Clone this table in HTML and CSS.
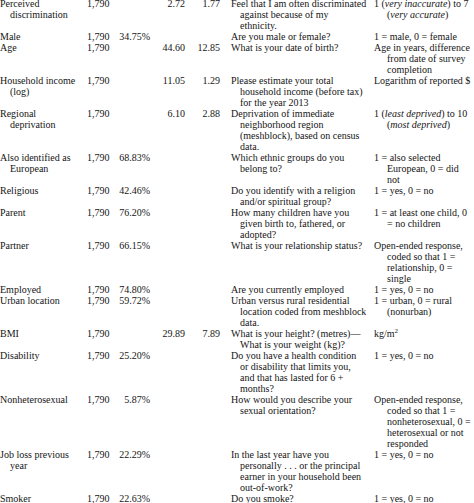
FILE: index.html
```html
<!DOCTYPE html>
<html lang="en">
<head>
<meta charset="utf-8">
<title>Descriptive statistics</title>
<link rel="stylesheet" href="styles.css">
</head>
<body>
<table class="stats">
  <colgroup>
    <col class="w-var">
    <col class="w-n">
    <col class="w-pct">
    <col class="w-mean">
    <col class="w-sd">
    <col class="w-q">
    <col class="w-code">
  </colgroup>
  <tbody>
    <tr>
      <td class="var">Perceived discrimination</td>
      <td class="num-l">1,790</td>
      <td class="num"></td>
      <td class="num">2.72</td>
      <td class="num">1.77</td>
      <td class="q">Feel that I am often discriminated against because of my ethnicity.</td>
      <td class="code">1 (<i>very inaccurate</i>) to 7 (<i>very accurate</i>)</td>
    </tr>
    <tr>
      <td class="var">Male</td>
      <td class="num-l">1,790</td>
      <td class="num">34.75%</td>
      <td class="num"></td>
      <td class="num"></td>
      <td class="q">Are you male or female?</td>
      <td class="code">1 = male, 0 = female</td>
    </tr>
    <tr>
      <td class="var">Age</td>
      <td class="num-l">1,790</td>
      <td class="num"></td>
      <td class="num">44.60</td>
      <td class="num">12.85</td>
      <td class="q">What is your date of birth?</td>
      <td class="code">Age in years, difference from date of survey completion</td>
    </tr>
    <tr>
      <td class="var">Household income (log)</td>
      <td class="num-l">1,790</td>
      <td class="num"></td>
      <td class="num">11.05</td>
      <td class="num">1.29</td>
      <td class="q">Please estimate your total household income (before tax) for the year 2013</td>
      <td class="code">Logarithm of reported $</td>
    </tr>
    <tr>
      <td class="var">Regional deprivation</td>
      <td class="num-l">1,790</td>
      <td class="num"></td>
      <td class="num">6.10</td>
      <td class="num">2.88</td>
      <td class="q">Deprivation of immediate neighborhood region (meshblock), based on census data.</td>
      <td class="code">1 (<i>least deprived</i>) to 10 (<i>most deprived</i>)</td>
    </tr>
    <tr>
      <td class="var">Also identified as European</td>
      <td class="num-l">1,790</td>
      <td class="num">68.83%</td>
      <td class="num"></td>
      <td class="num"></td>
      <td class="q">Which ethnic groups do you belong to?</td>
      <td class="code">1 = also selected European, 0 = did not</td>
    </tr>
    <tr>
      <td class="var">Religious</td>
      <td class="num-l">1,790</td>
      <td class="num">42.46%</td>
      <td class="num"></td>
      <td class="num"></td>
      <td class="q">Do you identify with a religion and/or spiritual group?</td>
      <td class="code">1 = yes, 0 = no</td>
    </tr>
    <tr>
      <td class="var">Parent</td>
      <td class="num-l">1,790</td>
      <td class="num">76.20%</td>
      <td class="num"></td>
      <td class="num"></td>
      <td class="q">How many children have you given birth to, fathered, or adopted?</td>
      <td class="code">1 = at least one child, 0 = no children</td>
    </tr>
    <tr>
      <td class="var">Partner</td>
      <td class="num-l">1,790</td>
      <td class="num">66.15%</td>
      <td class="num"></td>
      <td class="num"></td>
      <td class="q">What is your relationship status?</td>
      <td class="code">Open-ended response, coded so that 1 = relationship, 0 = single</td>
    </tr>
    <tr>
      <td class="var">Employed</td>
      <td class="num-l">1,790</td>
      <td class="num">74.80%</td>
      <td class="num"></td>
      <td class="num"></td>
      <td class="q">Are you currently employed</td>
      <td class="code">1 = yes, 0 = no</td>
    </tr>
    <tr>
      <td class="var">Urban location</td>
      <td class="num-l">1,790</td>
      <td class="num">59.72%</td>
      <td class="num"></td>
      <td class="num"></td>
      <td class="q">Urban versus rural residential location coded from meshblock data.</td>
      <td class="code">1 = urban, 0 = rural (nonurban)</td>
    </tr>
    <tr>
      <td class="var">BMI</td>
      <td class="num-l">1,790</td>
      <td class="num"></td>
      <td class="num">29.89</td>
      <td class="num">7.89</td>
      <td class="q">What is your height? (metres)— What is your weight (kg)?</td>
      <td class="code">kg/m<sup>2</sup></td>
    </tr>
    <tr>
      <td class="var">Disability</td>
      <td class="num-l">1,790</td>
      <td class="num">25.20%</td>
      <td class="num"></td>
      <td class="num"></td>
      <td class="q">Do you have a health condition or disability that limits you, and that has lasted for 6 + months?</td>
      <td class="code">1 = yes, 0 = no</td>
    </tr>
    <tr>
      <td class="var">Nonheterosexual</td>
      <td class="num-l">1,790</td>
      <td class="num">5.87%</td>
      <td class="num"></td>
      <td class="num"></td>
      <td class="q">How would you describe your sexual orientation?</td>
      <td class="code">Open-ended response, coded so that 1 = nonheterosexual, 0 = heterosexual or not responded</td>
    </tr>
    <tr>
      <td class="var">Job loss previous year</td>
      <td class="num-l">1,790</td>
      <td class="num">22.29%</td>
      <td class="num"></td>
      <td class="num"></td>
      <td class="q">In the last year have you personally .&nbsp;.&nbsp;. or the principal earner in your household been out-of-work?</td>
      <td class="code">1 = yes, 0 = no</td>
    </tr>
    <tr>
      <td class="var">Smoker</td>
      <td class="num-l">1,790</td>
      <td class="num">22.63%</td>
      <td class="num"></td>
      <td class="num"></td>
      <td class="q">Do you smoke?</td>
      <td class="code">1 = yes, 0 = no</td>
    </tr>
  </tbody>
</table>
</body>
</html>
```

FILE: styles.css
```css
html, body {
  margin: 0;
  padding: 0;
  background: #ffffff;
}

body {
  font-family: "Liberation Serif", "Times New Roman", serif;
  font-size: 10px;
  line-height: 11px;
  color: #151515;
  overflow: hidden;
}

.stats {
  border-collapse: collapse;
  table-layout: fixed;
  width: 474px;
  margin-top: -2px;
}

.w-var { width: 87px; }
.w-n { width: 30px; }
.w-pct { width: 33px; }
.w-mean { width: 35px; }
.w-sd { width: 35px; }
.w-q { width: 154px; }
.w-code { width: 100px; }

.stats td {
  padding: 0;
  vertical-align: top;
}

.stats .var {
  padding-left: 10px;
  padding-right: 7px;
  text-indent: -10px;
}

.stats .num-l {
  text-align: left;
  white-space: nowrap;
}

.stats .num {
  text-align: right;
  white-space: nowrap;
}

.stats .q {
  padding-left: 20px;
  padding-right: 7.5px;
  text-indent: -9px;
}

.stats .code {
  padding-left: 13px;
  padding-right: 1px;
  text-indent: -13px;
}

.stats sup {
  font-size: 7px;
  line-height: 0;
  vertical-align: 4px;
}
```
